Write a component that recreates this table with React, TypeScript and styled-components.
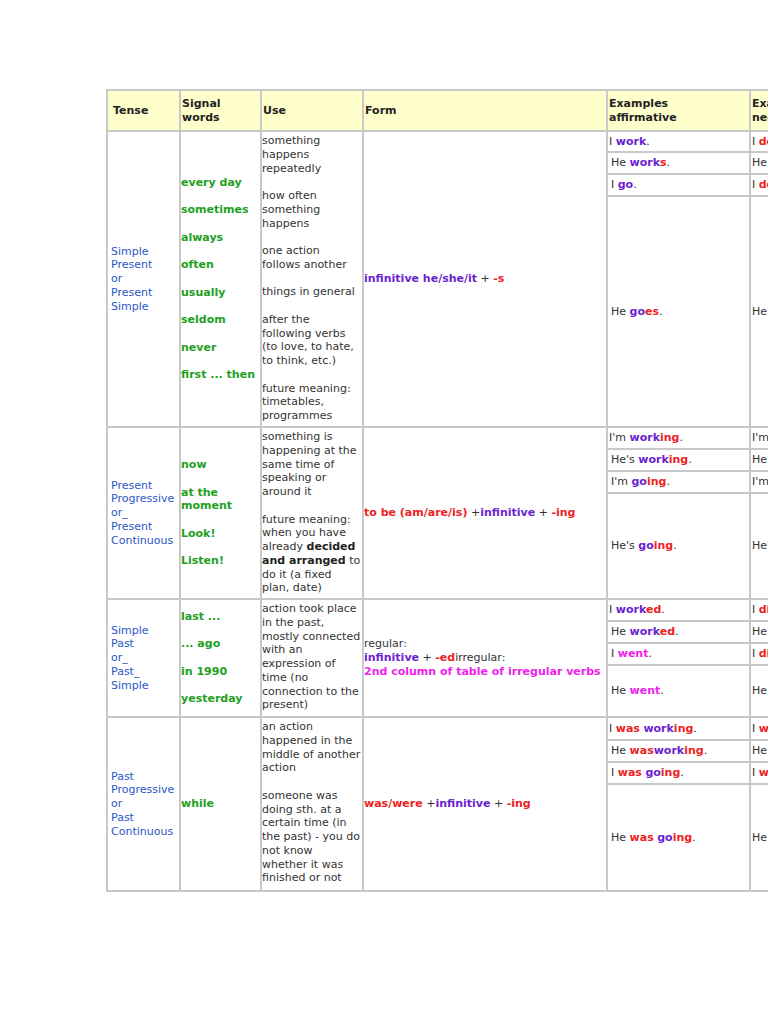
import React from "react";
import styled, { createGlobalStyle } from "styled-components";

const Global = createGlobalStyle`
  html, body { margin: 0; padding: 0; background: #fff; overflow: hidden; }
  * { box-sizing: border-box; }
`;

const Page = styled.div`
  padding: 89px 0 0 106px;
  width: 960px;
  font-family: "DejaVu Sans", Verdana, sans-serif;
  font-size: 11px;
  line-height: 13.75px;
  color: #333;
`;

const Table = styled.table`
  table-layout: fixed;
  width: 794px;
  border-collapse: separate;
  border-spacing: 0;
  border: 1px solid #c9c9c9;
`;

const Th = styled.th<{ $pl?: number }>`
  background: #ffffcc;
  border: 1px solid #c9c9c9;
  text-align: left;
  vertical-align: middle;
  font-weight: bold;
  color: #222;
  padding: 2px 1px 2px ${(p) => p.$pl ?? 1}px;
  height: 41px;
`;

const Td = styled.td<{ $pl?: number; $valign?: string }>`
  border: 1px solid #c9c9c9;
  vertical-align: ${(p) => p.$valign ?? "middle"};
  padding: 2px 1px 2px ${(p) => p.$pl ?? 1}px;
  overflow: hidden;
  white-space: normal;
`;

const ExTd = styled.td<{ $pl: number }>`
  border: 1px solid #c9c9c9;
  vertical-align: middle;
  padding: 0 1px 0 ${(p) => p.$pl}px;
  white-space: nowrap;
  overflow: hidden;
`;

const Tense = styled.div`
  color: #2b56c6;
`;

const Para = styled.p<{ $c?: "green" }>`
  margin: 0 0 13.75px;
  color: ${(p) => (p.$c === "green" ? "#22a022" : "#333")};
  font-weight: ${(p) => (p.$c === "green" ? "bold" : "normal")};
  &:last-child { margin-bottom: 0; }
`;

const colors: Record<string, string> = {
  p: "#6a1fd2",
  r: "#ee2222",
  m: "#ee22ee",
};

const Mark = styled.span<{ $c: string }>`
  color: ${(p) => colors[p.$c]};
  font-weight: bold;
`;

const NoWrap = styled.span`
  white-space: nowrap;
`;

type Seg = string | [string, string];

const Segs = ({ s }: { s: Seg[] }) => (
  <>
    {s.map((x, i) =>
      typeof x === "string" ? (
        <React.Fragment key={i}>{x}</React.Fragment>
      ) : (
        <Mark key={i} $c={x[1]}>
          {x[0]}
        </Mark>
      )
    )}
  </>
);

type Block = {
  tense: string[];
  signals: string[][];
  use: React.ReactNode[];
  form: React.ReactNode;
  aff: Seg[][];
  neg: Seg[][];
  heights: number[];
};

const B = styled.b`
  font-weight: bold;
  color: #222;
`;

const blocks: Block[] = [
  {
    tense: ["Simple", "Present", "or", "Present", "Simple"],
    signals: [["every day"], ["sometimes"], ["always"], ["often"], ["usually"], ["seldom"], ["never"], ["first ... then"]],
    use: [
      "something happens repeatedly",
      "how often something happens",
      "one action follows another",
      "things in general",
      "after the following verbs (to love, to hate, to think, etc.)",
      "future meaning: timetables, programmes",
    ],
    form: <Segs s={[["infinitive he/she/it", "p"], " + ", ["-s", "r"]]} />,
    aff: [
      ["I ", ["work", "p"], "."],
      ["He ", ["work", "p"], ["s", "r"], "."],
      ["I ", ["go", "p"], "."],
      ["He ", ["go", "p"], ["es", "r"], "."],
    ],
    neg: [
      ["I ", ["do not", "r"], " ", ["work", "p"], "."],
      ["He ", ["does not", "r"], " ", ["work", "p"], "."],
      ["I ", ["do not", "r"], " ", ["go", "p"], "."],
      ["He ", ["does not", "r"], " ", ["go", "p"], "."],
    ],
    heights: [21, 22, 22, 231],
  },
  {
    tense: ["Present", "Progressive", "or_", "Present", "Continuous"],
    signals: [["now"], ["at the", "moment"], ["Look!"], ["Listen!"]],
    use: [
      "something is happening at the same time of speaking or around it",
      <>
        future meaning: when you have already <B>decided and arranged</B> to do it (a fixed plan, date)
      </>,
    ],
    form: (
      <Segs s={[["to be (am/are/is)", "r"], " +", ["infinitive", "p"], " + ", ["-ing", "r"]]} />
    ),
    aff: [
      ["I'm ", ["work", "p"], ["ing", "r"], "."],
      ["He's ", ["work", "p"], ["ing", "r"], "."],
      ["I'm ", ["go", "p"], ["ing", "r"], "."],
      ["He's ", ["go", "p"], ["ing", "r"], "."],
    ],
    neg: [
      ["I'm ", ["not", "r"], " ", ["work", "p"], ["ing", "r"], "."],
      ["He's ", ["not", "r"], " ", ["work", "p"], ["ing", "r"], "."],
      ["I'm ", ["not", "r"], " ", ["go", "p"], ["ing", "r"], "."],
      ["He's ", ["not", "r"], " ", ["go", "p"], ["ing", "r"], "."],
    ],
    heights: [22, 22, 22, 106],
  },
  {
    tense: ["Simple", "Past", "or_", "Past_", "Simple"],
    signals: [["last ..."], ["... ago"], ["in 1990"], ["yesterday"]],
    use: ["action took place in the past, mostly connected with an expression of time (no connection to the present)"],
    form: (
      <>
        regular:
        <br />
        <Segs s={[["infinitive", "p"], " + ", ["-ed", "r"], "irregular:"]} />
        <br />
        <NoWrap>
          <Mark $c="m">2nd column of table of irregular verbs</Mark>
        </NoWrap>
      </>
    ),
    aff: [
      ["I ", ["work", "p"], ["ed", "r"], "."],
      ["He ", ["work", "p"], ["ed", "r"], "."],
      ["I ", ["went", "m"], "."],
      ["He ", ["went", "m"], "."],
    ],
    neg: [
      ["I ", ["did not", "r"], " ", ["work", "p"], "."],
      ["He ", ["did not", "r"], " ", ["work", "p"], "."],
      ["I ", ["did not", "r"], " ", ["go", "p"], "."],
      ["He ", ["did not", "r"], " ", ["go", "p"], "."],
    ],
    heights: [22, 22, 22, 52],
  },
  {
    tense: ["Past", "Progressive", "or", "Past", "Continuous"],
    signals: [["while"]],
    use: [
      "an action happened in the middle of another action",
      "someone was doing sth. at a certain time (in the past) - you do not know whether it was finished or not",
    ],
    form: <Segs s={[["was/were", "r"], " +", ["infinitive", "p"], " + ", ["-ing", "r"]]} />,
    aff: [
      ["I ", ["was", "r"], " ", ["work", "p"], ["ing", "r"], "."],
      ["He ", ["was", "r"], ["work", "p"], ["ing", "r"], "."],
      ["I ", ["was", "r"], " ", ["go", "p"], ["ing", "r"], "."],
      ["He ", ["was", "r"], " ", ["go", "p"], ["ing", "r"], "."],
    ],
    neg: [
      ["I ", ["was not", "r"], " ", ["work", "p"], ["ing", "r"], "."],
      ["He ", ["was not", "r"], " ", ["work", "p"], ["ing", "r"], "."],
      ["I ", ["was not", "r"], " ", ["go", "p"], ["ing", "r"], "."],
      ["He ", ["was not", "r"], " ", ["go", "p"], ["ing", "r"], "."],
    ],
    heights: [23, 22, 22, 107],
  },
];

export default function App() {
  return (
    <>
      <Global />
      <Page>
        <Table>
          <colgroup>
            <col style={{ width: 73 }} />
            <col style={{ width: 81 }} />
            <col style={{ width: 102 }} />
            <col style={{ width: 244 }} />
            <col style={{ width: 143 }} />
            <col style={{ width: 150 }} />
          </colgroup>
          <thead>
            <tr>
              <Th $pl={5}>Tense</Th>
              <Th>
                Signal
                <br />
                words
              </Th>
              <Th>Use</Th>
              <Th>Form</Th>
              <Th>
                Examples
                <br />
                affirmative
              </Th>
              <Th>
                Examples
                <br />
                negative
              </Th>
            </tr>
          </thead>
          <tbody>
            {blocks.map((b, bi) =>
              b.aff.map((a, ri) => (
                <tr key={`${bi}-${ri}`} style={{ height: b.heights[ri] }}>
                  {ri === 0 && (
                    <>
                      <Td rowSpan={4} $pl={3}>
                        <Tense>
                          {b.tense.map((t, i) => (
                            <React.Fragment key={i}>
                              {t}
                              {i < b.tense.length - 1 && <br />}
                            </React.Fragment>
                          ))}
                        </Tense>
                      </Td>
                      <Td rowSpan={4} $pl={0}>
                        {b.signals.map((s, i) => (
                          <Para key={i} $c="green">
                            {s.map((l, j) => (
                              <React.Fragment key={j}>
                                {l}
                                {j < s.length - 1 && <br />}
                              </React.Fragment>
                            ))}
                          </Para>
                        ))}
                      </Td>
                      <Td rowSpan={4} $pl={0} $valign="top">
                        {b.use.map((u, i) => (
                          <Para key={i}>{u}</Para>
                        ))}
                      </Td>
                      <Td rowSpan={4} $pl={0}>
                        {b.form}
                      </Td>
                    </>
                  )}
                  <ExTd $pl={ri === 0 ? 1 : 3}>
                    <Segs s={a} />
                  </ExTd>
                  <ExTd $pl={1}>
                    <Segs s={b.neg[ri]} />
                  </ExTd>
                </tr>
              ))
            )}
          </tbody>
        </Table>
      </Page>
    </>
  );
}
